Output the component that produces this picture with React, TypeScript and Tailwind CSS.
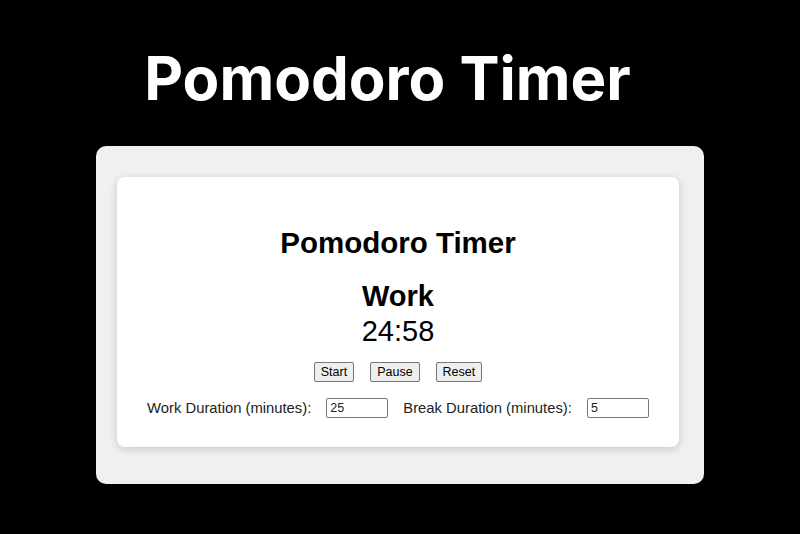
export default function App() {
  return (
    <div className="flex h-[534px] w-[800px] flex-col items-center bg-black">
      {/* Page heading */}
      <h1 className="mt-[40px] pr-[25px] font-['Inter',sans-serif] text-[60px] leading-[76px] font-bold text-white">
        Pomodoro Timer
      </h1>

      {/* Grey frame */}
      <div className="mt-[30px] w-[608px] rounded-[10px] bg-[#f0f0f0] pt-[31px] pr-[25px] pb-[37px] pl-[21px]">
        {/* White card */}
        <div className="flex h-[270px] flex-col items-center rounded-[8px] bg-white pt-[49px] font-['Liberation_Sans',Arial,sans-serif] text-black shadow-[0_2px_8px_rgba(0,0,0,0.18)]">
          <h2 className="text-[29.5px] leading-[34px] font-bold">Pomodoro Timer</h2>

          <div className="mt-[21px] text-[29px] leading-[30px] font-bold">Work</div>
          <div className="mt-[4px] text-[29px] leading-[33px]">24:58</div>

          <div className="mt-[14px] flex gap-[16px]">
            <button className="h-[20px] rounded-[2px] border border-[#767676] bg-[#efefef] px-[6px] text-[12.5px] leading-none">
              Start
            </button>
            <button className="h-[20px] rounded-[2px] border border-[#767676] bg-[#efefef] px-[6px] text-[12.5px] leading-none">
              Pause
            </button>
            <button className="h-[20px] rounded-[2px] border border-[#767676] bg-[#efefef] px-[6px] text-[12.5px] leading-none">
              Reset
            </button>
          </div>

          <div className="mt-[15px] flex items-center text-[14.8px] text-[#222]">
            <label>Work Duration (minutes):</label>
            <input
              type="number"
              defaultValue={25}
              className="ml-[15px] h-[20px] w-[62px] rounded-[2px] border border-[#767676] px-[3px] text-[12.5px] [appearance:textfield]"
            />
            <label className="ml-[15px]">Break Duration (minutes):</label>
            <input
              type="number"
              defaultValue={5}
              className="ml-[15px] h-[20px] w-[62px] rounded-[2px] border border-[#767676] px-[3px] text-[12.5px] [appearance:textfield]"
            />
          </div>
        </div>
      </div>
    </div>
  );
}
